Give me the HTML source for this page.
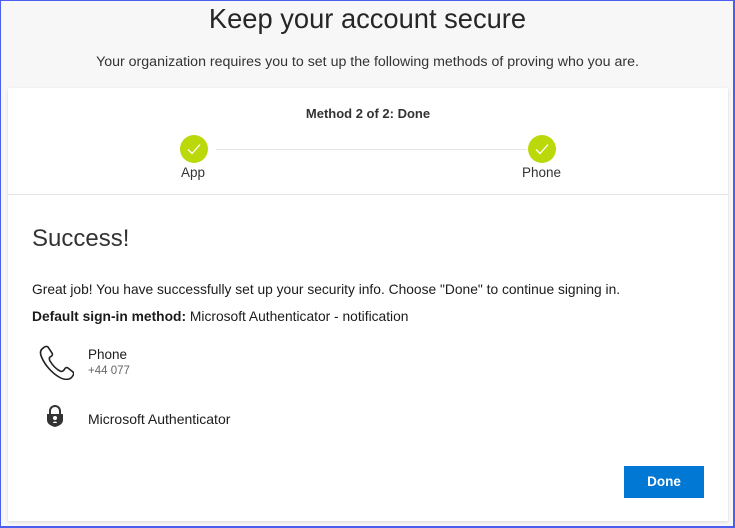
<!DOCTYPE html>
<html><head><style>
*{margin:0;padding:0;box-sizing:border-box}
body{width:735px;height:528px;overflow:hidden;font-family:"Segoe UI","Liberation Sans",sans-serif;color:#1b1b1b;}
.frame{position:absolute;left:0;top:0;width:735px;height:528px;border:1px solid #4a5ff0;border-right-width:2px;border-bottom-width:2px;background:#f7f7f7}
h1{position:absolute;top:2px;left:0;width:733px;text-align:center;font-weight:300;font-size:27.3px;color:#262626}
.sub{position:absolute;top:53px;left:0;width:733px;text-align:center;font-size:14.2px;color:#333}
.card{position:absolute;left:7px;top:87px;width:720px;height:433px;background:#fff;box-shadow:0 1px 3px rgba(0,0,0,.12)}
.m{position:absolute;top:18px;width:100%;text-align:center;font-size:13px;font-weight:600;color:#333}
.c{position:absolute;width:28px;height:28px;border-radius:50%;background:#bad80a;top:47px}
.c svg{position:absolute;left:7px;top:8px}
.line{position:absolute;top:61px;left:208px;width:311px;height:1px;background:#e5e5e5}
.lbl{position:absolute;top:77px;font-size:13.5px;color:#333}
.sep{position:absolute;top:106px;left:0;width:100%;height:1px;background:#e5e5e5}
.succ{position:absolute;left:24px;top:137px;font-size:24px;font-weight:300;color:#333}
.t1{position:absolute;left:24px;top:194px;font-size:13.8px;color:#1b1b1b}
.t2{position:absolute;left:24px;top:221px;font-size:13.8px}
.ph{position:absolute;left:80px;top:259px;font-size:13.5px}
.num{position:absolute;left:80px;top:277px;font-size:11.5px;color:#666}
.ma{position:absolute;left:80px;top:323px;font-size:14px}
.btn{position:absolute;left:616px;top:378px;width:80px;height:32px;background:#0078d4;color:#fff;font-size:13.5px;font-weight:600;text-align:center;line-height:32px}
</style></head><body>
<div class="frame">
<h1>Keep your account secure</h1>
<div class="sub">Your organization requires you to set up the following methods of proving who you are.</div>
<div class="card">
<div class="m">Method 2 of 2: Done</div>
<div class="line"></div>
<div class="c" style="left:172px"><svg width="14" height="12" viewBox="0 0 14 12"><path d="M1 6.5l4 4L13 1.5" fill="none" stroke="#fff" stroke-width="1.3"/></svg></div>
<div class="c" style="left:520px"><svg width="14" height="12" viewBox="0 0 14 12"><path d="M1 6.5l4 4L13 1.5" fill="none" stroke="#fff" stroke-width="1.3"/></svg></div>
<div class="lbl" style="left:173px">App</div>
<div class="lbl" style="left:514px">Phone</div>
<div class="sep"></div>
<div class="succ">Success!</div>
<div class="t1">Great job! You have successfully set up your security info. Choose "Done" to continue signing in.</div>
<div class="t2"><b>Default sign-in method:</b> Microsoft Authenticator - notification</div>
<svg style="position:absolute;left:30px;top:256px" width="36" height="36" viewBox="0 0 36 36"><path d="M4 5c3-3 5-3 6-2l4 6c1 2 0 3-2 4-1 1-1 2 0 4 3 5 6 8 10 10 2 1 3 0 4-1 1-2 2-3 4-2l5 4c1 1 1 3-2 6-3 2-7 2-12-1C14 29 7 21 4 14 2 10 2 7 4 5z" fill="none" stroke="#222" stroke-width="1.6"/></svg>
<svg style="position:absolute;left:38px;top:317px" width="18" height="22" viewBox="0 0 18 22"><path d="M4 9V6a5 5 0 0 1 10 0v3" fill="none" stroke="#333" stroke-width="2"/><path d="M1 9h16v6c0 4-4 6-8 7-4-1-8-3-8-7z" fill="#333"/><circle cx="9" cy="13" r="2" fill="#fff"/><path d="M7 18c0-2 4-2 4 0z" fill="#fff"/></svg>
<div class="ph">Phone</div>
<div class="num">+44 077</div>
<div class="ma">Microsoft Authenticator</div>
<div class="btn">Done</div>
</div>
</div>
</body></html>
